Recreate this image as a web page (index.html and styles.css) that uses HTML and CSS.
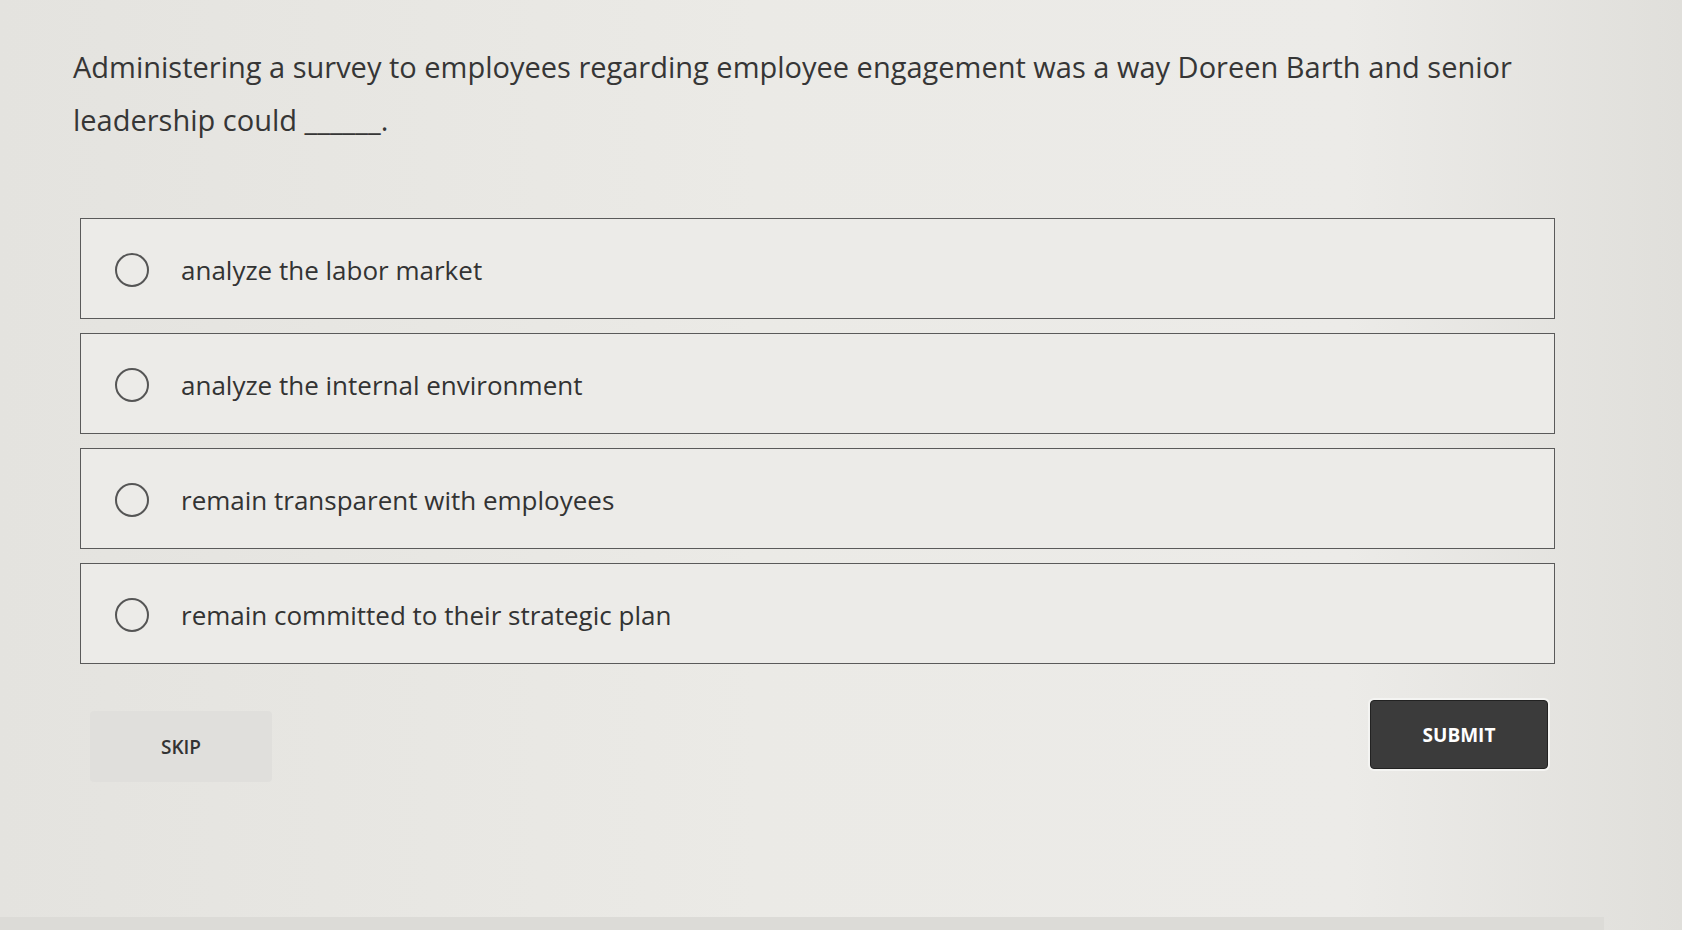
FILE: index.html
```html
<!DOCTYPE html>
<html lang="en">
<head>
    <meta charset="UTF-8">
    <meta name="viewport" content="width=device-width, initial-scale=1.0">
    <title>Question</title>
    <link rel="stylesheet" href="styles.css">
</head>
<body>
    <div class="page">
        <p class="question">Administering a survey to employees regarding employee engagement was a way Doreen Barth and senior leadership could ______.</p>

        <div class="options">
            <label class="option">
                <span class="radio"></span>
                <span class="option-text">analyze the labor market</span>
            </label>
            <label class="option">
                <span class="radio"></span>
                <span class="option-text">analyze the internal environment</span>
            </label>
            <label class="option">
                <span class="radio"></span>
                <span class="option-text">remain transparent with employees</span>
            </label>
            <label class="option">
                <span class="radio"></span>
                <span class="option-text">remain committed to their strategic plan</span>
            </label>
        </div>

        <!-- Tombol bawah -->
        <div class="actions">
            <button type="button" class="btn-skip">SKIP</button>
            <button type="button" class="btn-submit">SUBMIT</button>
        </div>
    </div>
    <div class="bottom-strip"></div>
</body>
</html>
```

FILE: styles.css
```css
body {
    margin: 0;
    padding: 0;
    font-family: 'Open Sans', 'Noto Sans', sans-serif;
    color: #333;
    background: linear-gradient(90deg, #e4e3df 0%, #ebeae6 45%, #ecebe8 80%, #e0dfdb 100%);
    min-height: 100vh;
    display: flex;
    flex-direction: column;
    overflow: hidden;
}

.page {
    padding: 40px 127px 0 73px;
}

.question {
    margin: 0;
    font-size: 29px;
    line-height: 53px;
    color: #363636;
}

.options {
    margin-top: 72px;
    margin-left: 7px;
    display: flex;
    flex-direction: column;
    gap: 14px;
}

.option {
    display: flex;
    align-items: center;
    height: 101px;
    box-sizing: border-box;
    border: 1.5px solid #5a5a5a;
    background-color: #ecebe8;
    padding-left: 34px;
    padding-top: 3px;
    cursor: pointer;
}

.radio {
    width: 34px;
    height: 34px;
    box-sizing: border-box;
    border: 2px solid #555;
    border-radius: 50%;
    flex-shrink: 0;
}

.option-text {
    margin-left: 32px;
    font-size: 26px;
    color: #333;
}

.actions {
    display: flex;
    justify-content: space-between;
    align-items: flex-start;
    margin-top: 36px;
    padding: 0 7px 0 17px;
}

.btn-skip,
.btn-submit {
    font-family: 'Open Sans', 'Noto Sans', sans-serif;
    font-size: 19px;
    border: none;
    border-radius: 4px;
    cursor: pointer;
}

.btn-skip {
    margin-top: 11px;
    width: 182px;
    height: 71px;
    background-color: #e0dfdc;
    color: #333;
    font-weight: 600;
}

.btn-submit {
    width: 178px;
    height: 69px;
    background-color: #3b3b3b;
    color: #fff;
    font-weight: 700;
    border: 1px solid #222;
    box-shadow: 0 0 0 2px #f4f4f2;
}

.bottom-strip {
    margin-top: auto;
    height: 13px;
    width: 1604px;
    background-color: #dcdbd7;
}
```
